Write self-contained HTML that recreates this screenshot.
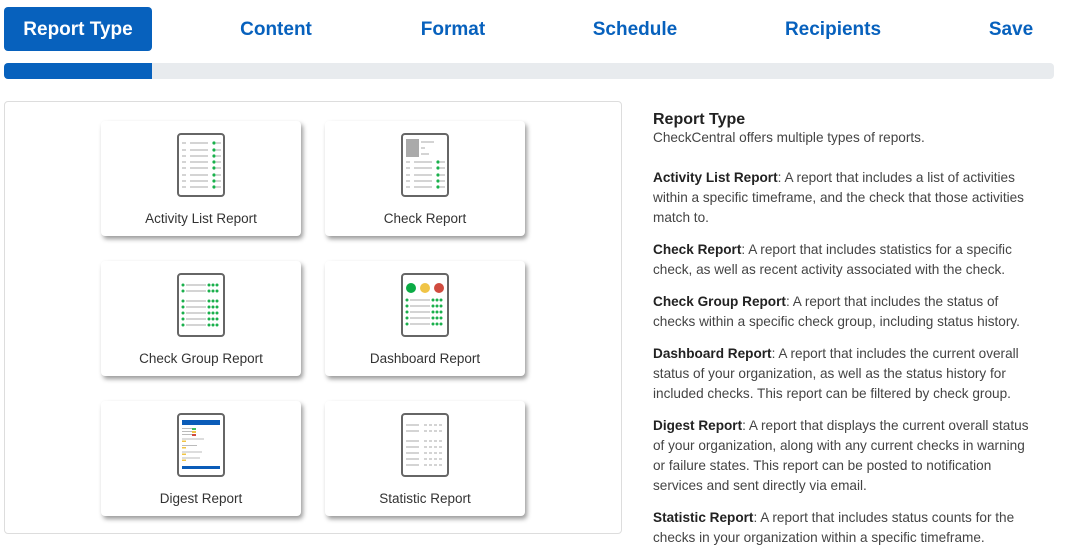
<!DOCTYPE html>
<html><head><meta charset="utf-8"><style>
*{box-sizing:border-box;margin:0;padding:0}
body{width:1068px;height:557px;background:#fff;font-family:"Liberation Sans",sans-serif;position:relative;overflow:hidden;color:#333}
.tab{position:absolute;top:7px;height:44px;line-height:46px;font-weight:bold;font-size:19px;color:#0761bd;text-align:center;transform:translateX(-50%);white-space:nowrap}
.tab.active{left:4px;transform:none;width:148px;background:#0761bd;color:#fff;border-radius:4px}
.bar{position:absolute;left:4px;top:63px;width:1050px;height:16px;background:#e8ebee;border-radius:4px;overflow:hidden}
.bar div{width:148px;height:16px;background:#0761bd}
.panel{position:absolute;left:4px;top:101px;width:618px;height:433px;border:1px solid #ddd;border-radius:4px}
.card{position:absolute;width:200px;height:115px;background:#fff;border-radius:4px;box-shadow:2px 3px 5px rgba(0,0,0,.4)}
.card svg{position:absolute;left:76px;top:12px}
.card span{position:absolute;left:0;right:0;top:90px;text-align:center;font-size:13.5px;color:#333}
.info{position:absolute;left:653px;top:108px;font-size:13.6px;line-height:20px;color:#444;white-space:nowrap}
.info h3{font-size:16px;font-weight:bold;color:#222;line-height:20px;margin-top:2px;margin-bottom:-2px}
.info p{margin-bottom:12px}
.info b{color:#222}
</style></head><body>
<div class="tab active">Report Type</div>
<div class="tab" style="left:276px">Content</div>
<div class="tab" style="left:453px">Format</div>
<div class="tab" style="left:635px">Schedule</div>
<div class="tab" style="left:833px">Recipients</div>
<div class="tab" style="left:1011px">Save</div>
<div class="bar"><div></div></div>
<div class="panel"></div>

<div class="card" style="left:101px;top:121px">
<svg width="48" height="64" viewBox="0 0 48 64"><rect x="1" y="1" width="46" height="62" rx="3" fill="#fff" stroke="#666" stroke-width="2"/>
<g stroke="#bbb" stroke-width="1.3"><path d="M5 10h4M13 10h18M5 17h4M13 17h18M5 23h4M13 23h18M5 29h4M13 29h18M5 35h4M13 35h18M5 42h4M13 42h18M5 48h4M13 48h18M5 54h4M13 54h18M39 10h5M39 17h5M39 23h5M39 29h5M39 35h5M39 42h5M39 48h5M39 54h5"/></g>
<g fill="#1ab04c"><circle cx="37" cy="10" r="1.6"/><circle cx="37" cy="17" r="1.6"/><circle cx="37" cy="23" r="1.6"/><circle cx="37" cy="29" r="1.6"/><circle cx="37" cy="35" r="1.6"/><circle cx="37" cy="42" r="1.6"/><circle cx="37" cy="48" r="1.6"/><circle cx="37" cy="54" r="1.6"/></g></svg>
<span>Activity List Report</span></div>

<div class="card" style="left:325px;top:121px">
<svg width="48" height="64" viewBox="0 0 48 64"><rect x="1" y="1" width="46" height="62" rx="3" fill="#fff" stroke="#666" stroke-width="2"/>
<rect x="5" y="6" width="13" height="18" fill="#aaa"/>
<g stroke="#bbb" stroke-width="1.3"><path d="M20 9h13M20 15h4M20 21h8M5 29h4M13 29h18M5 35h4M13 35h18M5 42h4M13 42h18M5 48h4M13 48h18M5 54h4M13 54h18M39 29h5M39 35h5M39 42h5M39 48h5M39 54h5"/></g>
<g fill="#1ab04c"><circle cx="37" cy="29" r="1.6"/><circle cx="37" cy="35" r="1.6"/><circle cx="37" cy="42" r="1.6"/><circle cx="37" cy="48" r="1.6"/><circle cx="37" cy="54" r="1.6"/></g></svg>
<span>Check Report</span></div>

<div class="card" style="left:101px;top:261px">
<svg width="48" height="64" viewBox="0 0 48 64"><rect x="1" y="1" width="46" height="62" rx="3" fill="#fff" stroke="#666" stroke-width="2"/>
<g stroke="#bbb" stroke-width="1.3"><path d="M9 12h20M9 18h20M9 28h20M9 34h20M9 40h20M9 46h20M9 52h20"/></g>
<g fill="#1ab04c"><g id="r"><circle cx="6" cy="12" r="1.5"/><circle cx="32" cy="12" r="1.5"/><circle cx="36" cy="12" r="1.5"/><circle cx="40" cy="12" r="1.5"/></g>
<use href="#r" y="6"/><use href="#r" y="16"/><use href="#r" y="22"/><use href="#r" y="28"/><use href="#r" y="34"/><use href="#r" y="40"/></g></svg>
<span>Check Group Report</span></div>

<div class="card" style="left:325px;top:261px">
<svg width="48" height="64" viewBox="0 0 48 64"><rect x="1" y="1" width="46" height="62" rx="3" fill="#fff" stroke="#666" stroke-width="2"/>
<circle cx="10" cy="15" r="5" fill="#0bab45"/><circle cx="24" cy="15" r="5" fill="#f0c446"/><circle cx="38" cy="15" r="5" fill="#d04b3f"/>
<g stroke="#bbb" stroke-width="1.3"><path d="M9 27h20M9 33h20M9 39h20M9 45h20M9 51h20"/></g>
<g fill="#1ab04c"><g id="q"><circle cx="6" cy="27" r="1.5"/><circle cx="32" cy="27" r="1.5"/><circle cx="36" cy="27" r="1.5"/><circle cx="40" cy="27" r="1.5"/></g>
<use href="#q" y="6"/><use href="#q" y="12"/><use href="#q" y="18"/><use href="#q" y="24"/></g></svg>
<span>Dashboard Report</span></div>

<div class="card" style="left:101px;top:401px">
<svg width="48" height="64" viewBox="0 0 48 64"><rect x="1" y="1" width="46" height="62" rx="3" fill="#fff" stroke="#666" stroke-width="2"/>
<rect x="5" y="7" width="38" height="5" fill="#0b5cb8"/><rect x="5" y="53" width="38" height="3" fill="#0b5cb8"/>
<g stroke="#bbb" stroke-width="1"><path d="M5 15.5h10M5 18.5h10M5 21.5h10M5 26h22M5 32.5h15M5 39h20M5 45h18"/></g>
<rect x="15" y="15" width="4" height="2" fill="#3fbf5f"/><rect x="15" y="18" width="4" height="2" fill="#f0c446"/><rect x="15" y="21" width="4" height="2" fill="#d04b3f"/>
<g fill="#f0c446"><rect x="5" y="27.5" width="4" height="1.5"/><rect x="5" y="34" width="4" height="1.5"/><rect x="5" y="40.5" width="4" height="1.5"/><rect x="5" y="46.5" width="4" height="1.5"/></g></svg>
<span>Digest Report</span></div>

<div class="card" style="left:325px;top:401px">
<svg width="48" height="64" viewBox="0 0 48 64"><rect x="1" y="1" width="46" height="62" rx="3" fill="#fff" stroke="#666" stroke-width="2"/>
<g stroke="#bbb" stroke-width="1.3"><path d="M5 12h13M5 18h13M5 28h13M5 34h13M5 40h13M5 46h13M5 52h13"/></g>
<g stroke="#bbb" stroke-width="1.3" stroke-dasharray="3 2"><path d="M23 12h20M23 18h20M23 28h20M23 34h20M23 40h20M23 46h20M23 52h20"/></g></svg>
<span>Statistic Report</span></div>

<div class="info">
<h3>Report Type</h3>
<p style="margin-bottom:20px">CheckCentral offers multiple types of reports.</p>
<p><b>Activity List Report</b>: A report that includes a list of activities<br>within a specific timeframe, and the check that those activities<br>match to.</p>
<p><b>Check Report</b>: A report that includes statistics for a specific<br>check, as well as recent activity associated with the check.</p>
<p><b>Check Group Report</b>: A report that includes the status of<br>checks within a specific check group, including status history.</p>
<p><b>Dashboard Report</b>: A report that includes the current overall<br>status of your organization, as well as the status history for<br>included checks. This report can be filtered by check group.</p>
<p><b>Digest Report</b>: A report that displays the current overall status<br>of your organization, along with any current checks in warning<br>or failure states. This report can be posted to notification<br>services and sent directly via email.</p>
<p><b>Statistic Report</b>: A report that includes status counts for the<br>checks in your organization within a specific timeframe.</p>
</div>
</body></html>
